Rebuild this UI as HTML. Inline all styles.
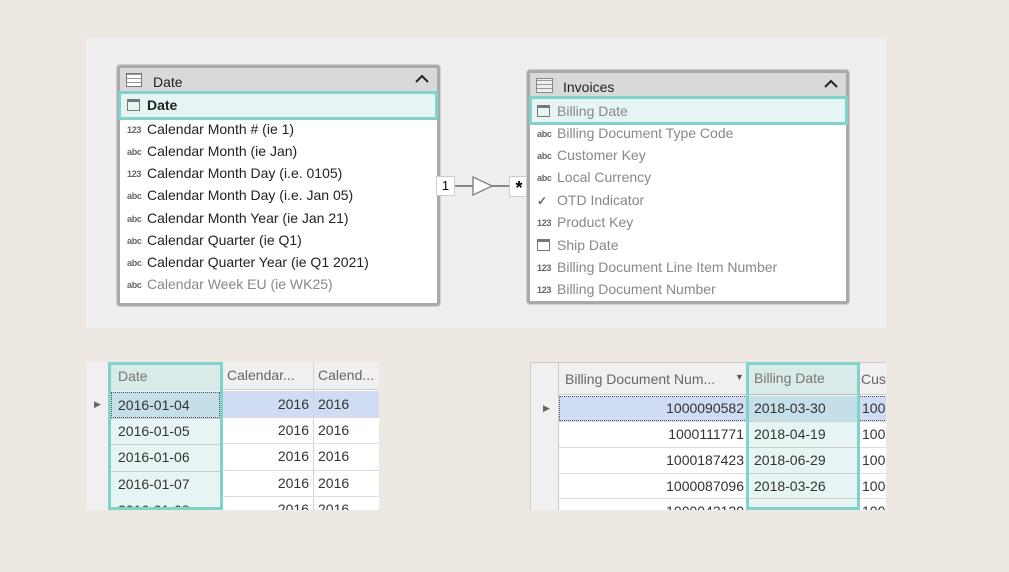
<!DOCTYPE html>
<html><head><style>
*{margin:0;padding:0;box-sizing:border-box}
body{width:1009px;height:572px;background:#ede9e2;position:relative;overflow:hidden;font-family:"Segoe UI","Liberation Sans",sans-serif;}
.abs{position:absolute}
.panel{left:86px;top:37px;width:800px;height:291px;background:#efefef}
.tbl{background:#fff;border:3px solid #a9a9a9;border-radius:3px;box-shadow:0 0 0 1px #d0d0d0}
.hdr{position:absolute;left:0;right:0;top:0;height:24px;background:#d9d9d9;font-size:14px;color:#222}
.row{position:absolute;left:6px;font-size:14px;color:#222;white-space:nowrap;line-height:18px}
.ic{display:inline-block;width:20px;font-size:9px;font-weight:bold;color:#666;letter-spacing:-.3px;vertical-align:middle}
.cal{display:inline-block;width:13px;height:12px;border:1.5px solid #777;border-top-width:3px;margin-right:7px;vertical-align:-1px}
.gray{color:#888}
.hl{position:absolute;border:3px solid #7fd3cb;background:#e6f5f3}
.cell{position:absolute;font-size:14px;color:#333;line-height:26px;white-space:nowrap;overflow:hidden}
.chev{position:absolute;right:8px;top:6px}
</style></head><body>
<div class="abs panel"></div>

<!-- Date table -->
<div class="abs tbl" style="left:117px;top:65px;width:323px;height:241px">
 <div class="hdr"><span class="abs" style="left:6px;top:5px;width:16px;height:14px;border:1px solid #777;background:repeating-linear-gradient(0deg,#fff 0 3px,#999 3px 4px)"></span><span class="abs" style="left:33px;top:6px">Date</span><svg class="chev" width="14" height="10"><polyline points="1,8 7,2 13,8" fill="none" stroke="#222" stroke-width="2"/></svg></div>
</div>
<div class="hl" style="left:118px;top:91px;width:320px;height:29px"></div>
<div class="abs" style="left:0;top:0">
 <div class="row" style="left:127px;top:96px;font-weight:bold"><span class="cal"></span>Date</div>
 <div class="row" style="left:127px;top:120px"><span class="ic">123</span>Calendar Month # (ie 1)</div>
 <div class="row" style="left:127px;top:142px"><span class="ic">abc</span>Calendar Month (ie Jan)</div>
 <div class="row" style="left:127px;top:164px"><span class="ic">123</span>Calendar Month Day (i.e. 0105)</div>
 <div class="row" style="left:127px;top:186px"><span class="ic">abc</span>Calendar Month Day (i.e. Jan 05)</div>
 <div class="row" style="left:127px;top:209px"><span class="ic">abc</span>Calendar Month Year (ie Jan 21)</div>
 <div class="row" style="left:127px;top:231px"><span class="ic">abc</span>Calendar Quarter (ie Q1)</div>
 <div class="row" style="left:127px;top:253px"><span class="ic">abc</span>Calendar Quarter Year (ie Q1 2021)</div>
 <div class="row gray" style="left:127px;top:275px"><span class="ic">abc</span>Calendar Week EU (ie WK25)</div>
</div>

<!-- connector -->
<div class="abs" style="left:436px;top:176px;width:19px;height:20px;background:#fff;border:1px solid #ccc;font-size:13px;text-align:center;line-height:18px">1</div>
<svg class="abs" style="left:455px;top:176px" width="55" height="22"><line x1="0" y1="10" x2="55" y2="10" stroke="#888" stroke-width="2"/><polygon points="18,1 37,10 18,19" fill="#fff" stroke="#888" stroke-width="1.5"/></svg>
<div class="abs" style="left:509px;top:176px;width:20px;height:21px;background:#fff;border:1px solid #ccc;font-size:18px;font-weight:bold;text-align:center;line-height:22px">*</div>

<!-- Invoices -->
<div class="abs tbl" style="left:527px;top:70px;width:322px;height:234px">
 <div class="hdr"><span class="abs" style="left:6px;top:5px;width:17px;height:15px;border:1px solid #888;background:repeating-linear-gradient(0deg,#eee 0 3px,#999 3px 4px)"></span><span class="abs" style="left:33px;top:6px">Invoices</span><svg class="chev" width="14" height="10"><polyline points="1,8 7,2 13,8" fill="none" stroke="#222" stroke-width="2"/></svg></div>
</div>
<div class="hl" style="left:529px;top:96px;width:319px;height:29px"></div>
<div class="abs gray" style="left:0;top:0;color:#777">
 <div class="row gray" style="left:537px;top:102px"><span class="cal"></span>Billing Date</div>
 <div class="row gray" style="left:537px;top:124px"><span class="ic">abc</span>Billing Document Type Code</div>
 <div class="row gray" style="left:537px;top:146px"><span class="ic">abc</span>Customer Key</div>
 <div class="row gray" style="left:537px;top:168px"><span class="ic">abc</span>Local Currency</div>
 <div class="row gray" style="left:537px;top:191px"><span class="ic" style="font-size:12px">&#10003;</span>OTD Indicator</div>
 <div class="row gray" style="left:537px;top:213px"><span class="ic">123</span>Product Key</div>
 <div class="row gray" style="left:537px;top:236px"><span class="cal"></span>Ship Date</div>
 <div class="row gray" style="left:537px;top:258px"><span class="ic">123</span>Billing Document Line Item Number</div>
 <div class="row gray" style="left:537px;top:280px"><span class="ic">123</span>Billing Document Number</div>
</div>

<!-- bottom left grid -->
<div class="abs" style="left:86px;top:362px;width:293px;height:148px;background:#fff;overflow:hidden">
 <div class="abs" style="left:0;top:0;width:293px;height:28px;background:#f0f0f0;border-bottom:1px solid #ccc"></div>
 <div class="abs" style="left:0;top:0;width:23px;height:148px;background:#f0f0f0;border-right:1px solid #ccc"></div>
 <div class="abs" style="left:136px;top:29px;width:157px;height:26px;background:#cfdcf3"></div>
 <div class="abs" style="left:136px;top:0;width:1px;height:148px;background:#d5d5d5"></div>
 <div class="abs" style="left:227px;top:0;width:1px;height:148px;background:#d5d5d5"></div>
 <div class="abs" style="left:23px;top:55px;width:270px;height:1px;background:#ddd"></div>
 <div class="abs" style="left:23px;top:81px;width:270px;height:1px;background:#ddd"></div>
 <div class="abs" style="left:23px;top:108px;width:270px;height:1px;background:#ddd"></div>
 <div class="abs" style="left:23px;top:134px;width:270px;height:1px;background:#ddd"></div>
 <div class="cell" style="left:8px;top:29px;font-size:9px;color:#666">&#9654;</div>
 <div class="cell" style="left:141px;top:0;color:#666">Calendar...</div>
 <div class="cell" style="left:232px;top:0;color:#666">Calend...</div>
 <div class="cell" style="left:140px;top:29px;width:83px;text-align:right">2016</div><div class="cell" style="left:232px;top:29px">2016</div>
 <div class="cell" style="left:140px;top:55px;width:83px;text-align:right">2016</div><div class="cell" style="left:232px;top:55px">2016</div>
 <div class="cell" style="left:140px;top:81px;width:83px;text-align:right">2016</div><div class="cell" style="left:232px;top:81px">2016</div>
 <div class="cell" style="left:140px;top:108px;width:83px;text-align:right">2016</div><div class="cell" style="left:232px;top:108px">2016</div>
 <div class="cell" style="left:140px;top:134px;width:83px;text-align:right">2016</div><div class="cell" style="left:232px;top:134px">2016</div>
</div>
<div class="hl" style="left:108px;top:362px;width:115px;height:148px;background:#e6f5f3;overflow:hidden">
 <div class="abs" style="left:0;top:0;width:109px;height:26px;background:#d9ebe8"></div>
 <div class="abs" style="left:0;top:27px;width:109px;height:26px;background:#c5dfe8;border:1px dotted #555"></div>
 <div class="abs" style="left:0;top:53px;width:109px;height:1px;background:#ccc"></div>
 <div class="abs" style="left:0;top:79px;width:109px;height:1px;background:#ccc"></div>
 <div class="abs" style="left:0;top:106px;width:109px;height:1px;background:#ccc"></div>
 <div class="cell" style="left:7px;top:-2px;color:#777">Date</div>
 <div class="cell" style="left:7px;top:27px">2016-01-04</div>
 <div class="cell" style="left:7px;top:53px">2016-01-05</div>
 <div class="cell" style="left:7px;top:79px">2016-01-06</div>
 <div class="cell" style="left:7px;top:106px">2016-01-07</div>
 <div class="cell" style="left:7px;top:132px">2016-01-08</div>
</div>

<!-- bottom right grid -->
<div class="abs" style="left:530px;top:362px;width:356px;height:148px;background:#fff;overflow:hidden;border-left:1px solid #ccc;border-top:1px solid #ccc">
 <div class="abs" style="left:0;top:0;width:356px;height:32px;background:#f0f0f0;border-bottom:1px solid #ccc"></div>
 <div class="abs" style="left:0;top:0;width:28px;height:148px;background:#f0f0f0;border-right:1px solid #ccc"></div>
 <div class="abs" style="left:28px;top:33px;width:328px;height:25px;background:#cfdcf3;border:1px dotted #555"></div>
 <div class="abs" style="left:28px;top:58px;width:328px;height:1px;background:#ddd"></div>
 <div class="abs" style="left:28px;top:84px;width:328px;height:1px;background:#ddd"></div>
 <div class="abs" style="left:28px;top:110px;width:328px;height:1px;background:#ddd"></div>
 <div class="abs" style="left:28px;top:135px;width:328px;height:1px;background:#ddd"></div>
 <div class="cell" style="left:12px;top:32px;font-size:9px;color:#666">&#9654;</div>
 <div class="cell" style="left:34px;top:3px;color:#666">Billing Document Num...</div>
 <div class="cell" style="left:204px;top:1px;font-size:9px;color:#555">&#9660;</div>
 <div class="cell" style="left:330px;top:3px;color:#666">Customer</div>
 <div class="cell" style="left:40px;top:32px;width:173px;text-align:right">1000090582</div><div class="cell" style="left:331px;top:32px">1000</div>
 <div class="cell" style="left:40px;top:58px;width:173px;text-align:right">1000111771</div><div class="cell" style="left:331px;top:58px">1000</div>
 <div class="cell" style="left:40px;top:84px;width:173px;text-align:right">1000187423</div><div class="cell" style="left:331px;top:84px">1000</div>
 <div class="cell" style="left:40px;top:110px;width:173px;text-align:right">1000087096</div><div class="cell" style="left:331px;top:110px">1000</div>
 <div class="cell" style="left:40px;top:135px;width:173px;text-align:right">1000043120</div><div class="cell" style="left:331px;top:135px">1000</div>
</div>
<div class="hl" style="left:746px;top:362px;width:114px;height:148px;overflow:hidden">
 <div class="abs" style="left:0;top:0;width:108px;height:30px;background:#d9ebe8;border-bottom:1px solid #bbb"></div>
 <div class="abs" style="left:0;top:31px;width:108px;height:25px;background:#c5dfe8"></div>
 <div class="abs" style="left:0;top:56px;width:108px;height:1px;background:#ccc"></div>
 <div class="abs" style="left:0;top:82px;width:108px;height:1px;background:#ccc"></div>
 <div class="abs" style="left:0;top:108px;width:108px;height:1px;background:#ccc"></div>
 <div class="abs" style="left:0;top:133px;width:108px;height:1px;background:#ccc"></div>
 <div class="cell" style="left:5px;top:0px;color:#777">Billing Date</div>
 <div class="cell" style="left:5px;top:30px">2018-03-30</div>
 <div class="cell" style="left:5px;top:56px">2018-04-19</div>
 <div class="cell" style="left:5px;top:82px">2018-06-29</div>
 <div class="cell" style="left:5px;top:108px">2018-03-26</div>
</div>
</body></html>
